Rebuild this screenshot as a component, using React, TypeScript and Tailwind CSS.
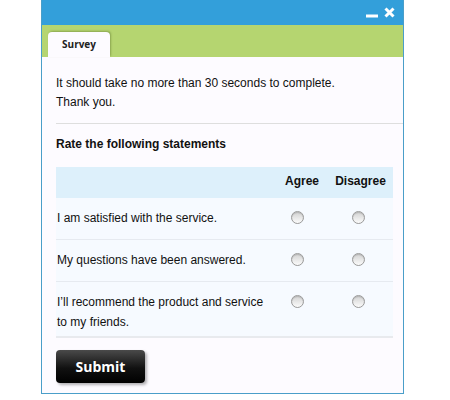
const statements = [
  'I am satisfied with the service.',
  'My questions have been answered.',
  'I\u2019ll recommend the product and service to my friends.',
];

const Radio = () => (
  <span className="inline-block w-[13px] h-[13px] rounded-full border border-[#9a9a9a] bg-[linear-gradient(#d2d2d2,#fbfbfb)] shadow-[inset_0_1px_1px_rgba(0,0,0,0.15)]" />
);

export default function App() {
  return (
    <div className="w-[450px] h-[400px] bg-white font-['Liberation_Sans',Arial,sans-serif] text-[12px] text-[#111]">
      <div className="ml-[41px] w-[363px] h-[394px] border-x border-b border-[#4a9ec9] flex flex-col bg-[#fdfbff]">
        {/* title bar */}
        <div className="h-[25px] shrink-0 bg-[#339fda] flex items-start justify-end pr-[8px] pt-[7px] gap-[6px]">
          <svg width="12" height="11" viewBox="0 0 12 11">
            <rect x="0" y="7.5" width="12" height="3" fill="#fff" />
          </svg>
          <svg width="11" height="11" viewBox="0 0 11 11">
            <path d="M1.5 1.5 L9.5 9.5 M9.5 1.5 L1.5 9.5" stroke="#fff" strokeWidth="3" strokeLinecap="butt" />
          </svg>
        </div>
        {/* tab strip */}
        <div className="h-[32px] shrink-0 bg-[#b5d570] flex items-end pl-[6px]">
          <div className="w-[62px] h-[25px] bg-[#fdfbff] rounded-t-[4px] shadow-[1px_-1px_2px_rgba(60,80,20,0.35)] flex items-center justify-center font-['Open_Sans',sans-serif] font-bold text-[10px] text-[#222]">
            Survey
          </div>
        </div>
        {/* body */}
        <div className="pl-[14px] pt-[17px] flex flex-col">
          <p className="leading-[19px]">It should take no more than 30 seconds to complete.</p>
          <p className="leading-[19px]">Thank you.</p>
          <div className="h-px bg-[#dedede] mt-[11px]" />
          <h2 className="font-bold mt-[11px] leading-[18px]">Rate the following statements</h2>
          <table className="mt-[14px] w-[337px] border-collapse table-fixed">
            <thead>
              <tr className="bg-[#ddf0fb] h-[31px]">
                <th className="w-[220px]" />
                <th className="w-[52px] font-bold text-center pb-[3px]">Agree</th>
                <th className="w-[65px] font-bold text-center pb-[3px]">Disagree</th>
              </tr>
            </thead>
            <tbody>
              {statements.map((s, i) => {
                const last = i === statements.length - 1;
                return (
                  <tr
                    key={s}
                    className={`bg-[#f6faff] ${last ? 'border-b-2 border-[#e8eaee]' : 'border-b border-[#e6eaf0]'}`}
                  >
                    <td className={`align-top pt-[10px] pl-[1px] pr-[4px] leading-[20px] ${last ? 'pb-[4px]' : 'pb-[11px]'}`}>{s}</td>
                    <td className="align-top pt-[13px] text-center pr-[10px]">
                      <Radio />
                    </td>
                    <td className="align-top pt-[13px] text-center pr-[4px]">
                      <Radio />
                    </td>
                  </tr>
                );
              })}
            </tbody>
          </table>
          <button className="mt-[12px] w-[89px] h-[33px] rounded-[4px] bg-[linear-gradient(#4a4a4a,#111_55%,#000)] shadow-[2px_2px_3px_rgba(0,0,0,0.3)] text-white font-['Open_Sans',sans-serif] font-bold text-[14px]">
            Submit
          </button>
        </div>
      </div>
    </div>
  );
}
